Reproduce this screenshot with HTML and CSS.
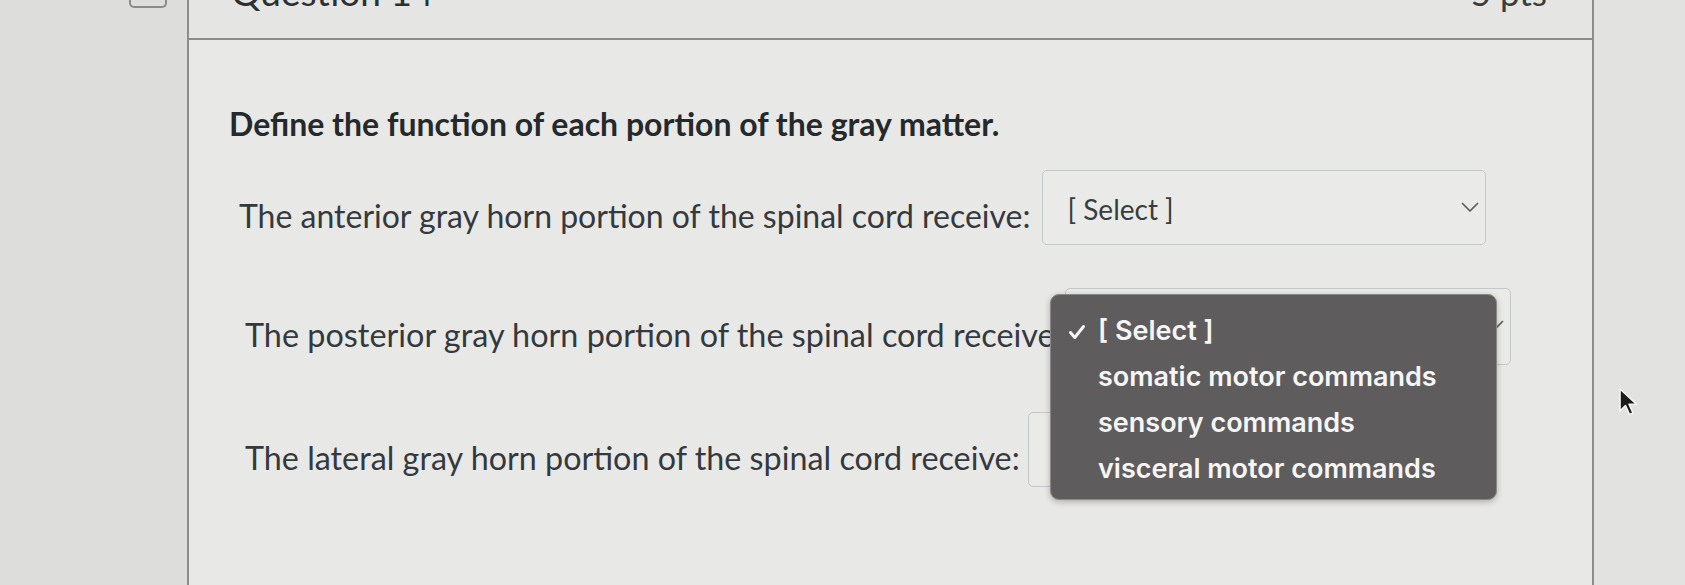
FILE: index.html
```html
<!DOCTYPE html>
<html lang="en">
<head>
<meta charset="utf-8">
<title>Question 14</title>
<link rel="stylesheet" href="styles.css">
</head>
<body>
<div class="screen">
  <aside class="gutter">
    <div class="flag"></div>
  </aside>
  <main class="card">
    <header class="card-head">
      <span class="q-title">Question 14</span>
      <span class="pts">5 pts</span>
    </header>
    <section class="card-body">
      <p class="prompt">Define the function of each portion of the gray matter.</p>
      <div class="row row-a">
        <span class="label">The anterior gray horn portion of the spinal cord receive:</span>
        <div class="select select-a">
          <span class="select-text">[ Select ]</span>
          <svg class="chev" width="18" height="11" viewBox="0 0 18 11"><path d="M1.5 1.5 L9 9 L16.5 1.5" fill="none" stroke="#5a5d60" stroke-width="1.7" stroke-linecap="round" stroke-linejoin="round"/></svg>
        </div>
      </div>
      <div class="row row-b">
        <span class="label">The posterior gray horn portion of the spinal cord receive:</span>
        <div class="select select-b">
          <span class="select-text">[ Select ]</span>
          <svg class="chev" width="18" height="11" viewBox="0 0 18 11"><path d="M1.5 1.5 L9 9 L16.5 1.5" fill="none" stroke="#5a5d60" stroke-width="1.7" stroke-linecap="round" stroke-linejoin="round"/></svg>
        </div>
      </div>
      <div class="row row-c">
        <span class="label">The lateral gray horn portion of the spinal cord receive:</span>
        <div class="select select-c">
          <span class="select-text">[ Select ]</span>
        </div>
      </div>
      <ul class="menu">
        <li class="menu-item checked">
          <svg class="check" width="18" height="16" viewBox="0 0 18 16"><path d="M2.5 8.5 L6.8 13.5 L15.5 2.5" fill="none" stroke="#f6f6f6" stroke-width="3" stroke-linecap="round" stroke-linejoin="round"/></svg>[ Select ]</li>
        <li class="menu-item">somatic motor commands</li>
        <li class="menu-item">sensory commands</li>
        <li class="menu-item">visceral motor commands</li>
      </ul>
    </section>
  </main>
  <div class="side">
    <svg class="cursor" width="24" height="32" viewBox="0 0 24 32">
      <path d="M2 2 L2 24 L7.5 18.5 L11.5 27.5 L15 26 L11 17.2 L18.5 17.2 Z" fill="#1c1c1c" stroke="#f4f4f4" stroke-width="1.6" stroke-linejoin="round"/>
    </svg>
  </div>
</div>
</body>
</html>
```
FILE: styles.css
```css
html, body {
  margin: 0;
  padding: 0;
}
body {
  width: 1685px;
  height: 585px;
  overflow: hidden;
  background: #e1e2e0;
  font-family: Lato, "Liberation Sans", sans-serif;
  color: #2f3337;
}
.screen {
  display: flex;
  height: 585px;
}
.gutter {
  width: 187px;
  flex: none;
  background: #dddedc;
}
.flag {
  width: 34px;
  height: 6px;
  margin-left: 129px;
  border: 2px solid #8a8c8c;
  border-top: none;
  border-radius: 0 0 5px 5px;
}
.card {
  width: 1403px;
  flex: none;
  border-left: 2px solid #8c8e8e;
  border-right: 2px solid #8c8e8e;
  background: #e8e9e7;
  display: flex;
  flex-direction: column;
}
.card-head {
  height: 38px;
  border-bottom: 2px solid #8a8c8c;
  display: flex;
  justify-content: space-between;
  overflow: hidden;
  padding: 0 45px 0 42px;
  background: #e5e6e4;
}
.q-title {
  font-size: 37px;
  line-height: 37px;
  margin-top: -27px;
  color: #2c2f33;
}
.pts {
  font-size: 35px;
  line-height: 35px;
  margin-top: -25px;
  color: #3a3d40;
}
.card-body {
  position: relative;
  flex: 1;
  padding-left: 40px;
}
.prompt {
  margin: 0;
  padding-top: 64px;
  font-weight: 700;
  font-size: 32px;
  line-height: 40px;
  color: #26292c;
}
.row {
  display: flex;
  align-items: flex-start;
}
.label {
  font-size: 32px;
  line-height: 36px;
  color: #35393d;
  white-space: nowrap;
}
.select {
  box-sizing: border-box;
  width: 444px;
  height: 75px;
  border: 1.5px solid #c4c7c7;
  border-radius: 5px;
  background: #eaebe9;
  display: flex;
  justify-content: space-between;
  align-items: flex-start;
  padding: 23px 6px 0 25px;
}
.select-text {
  font-size: 28px;
  line-height: 30px;
  color: #3a3d40;
}
.chev {
  margin-top: 8px;
}
.row-a {
  margin-top: 26px;
  padding-left: 10px;
}
.row-a .label {
  margin-top: 28px;
}
.row-a .select {
  margin-left: 11px;
}
.row-b {
  margin-top: 43px;
  padding-left: 16px;
}
.row-b .label {
  margin-top: 29px;
  font-size: 32.4px;
}
.row-b .select {
  margin-left: 2px;
  width: 446px;
  height: 77px;
}
.row-c {
  margin-top: 47px;
  padding-left: 16px;
}
.row-c .label {
  margin-top: 28px;
  font-size: 32.3px;
}
.row-c .select {
  margin-left: 8px;
}
.menu {
  position: absolute;
  left: 861px;
  top: 254px;
  width: 447px;
  height: 206px;
  box-sizing: border-box;
  margin: 0;
  padding: 13px 0 0 0;
  list-style: none;
  background: #5f5c5e;
  border: 1.5px solid #8a8889;
  border-radius: 9px;
  box-shadow: 0 2px 6px rgba(0,0,0,0.25);
  font-family: Inter, "Noto Sans", sans-serif;
  font-weight: 600;
  color: #f6f6f6;
}
.menu-item {
  font-size: 27px;
  line-height: 46px;
  padding-left: 47px;
  white-space: nowrap;
  position: relative;
}
.check {
  position: absolute;
  left: 17px;
  top: 16px;
}
.side {
  flex: 1;
  background: #e2e3e1;
  position: relative;
}
.cursor {
  position: absolute;
  left: 24px;
  top: 387px;
}
```
